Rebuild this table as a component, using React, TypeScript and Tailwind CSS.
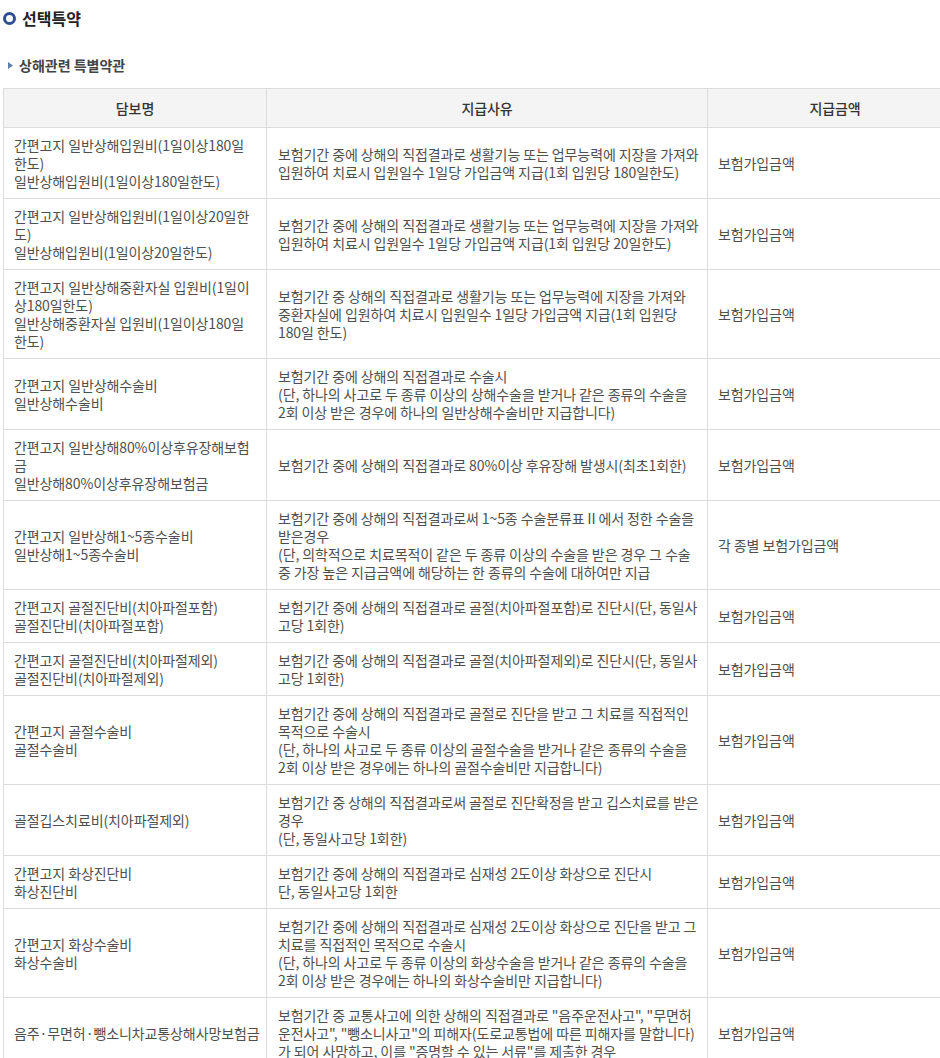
import React from 'react';

type Row = {
  name: string[];
  reason: string[];
  amount: string;
};

const rows: Row[] = [
  {
    name: ['간편고지 일반상해입원비(1일이상180일', '한도)', '일반상해입원비(1일이상180일한도)'],
    reason: [
      '보험기간 중에 상해의 직접결과로 생활기능 또는 업무능력에 지장을 가져와',
      '입원하여 치료시 입원일수 1일당 가입금액 지급(1회 입원당 180일한도)',
    ],
    amount: '보험가입금액',
  },
  {
    name: ['간편고지 일반상해입원비(1일이상20일한', '도)', '일반상해입원비(1일이상20일한도)'],
    reason: [
      '보험기간 중에 상해의 직접결과로 생활기능 또는 업무능력에 지장을 가져와',
      '입원하여 치료시 입원일수 1일당 가입금액 지급(1회 입원당 20일한도)',
    ],
    amount: '보험가입금액',
  },
  {
    name: ['간편고지 일반상해중환자실 입원비(1일이', '상180일한도)', '일반상해중환자실 입원비(1일이상180일', '한도)'],
    reason: [
      '보험기간 중 상해의 직접결과로 생활기능 또는 업무능력에 지장을 가져와',
      '중환자실에 입원하여 치료시 입원일수 1일당 가입금액 지급(1회 입원당',
      '180일 한도)',
    ],
    amount: '보험가입금액',
  },
  {
    name: ['간편고지 일반상해수술비', '일반상해수술비'],
    reason: [
      '보험기간 중에 상해의 직접결과로 수술시',
      '(단, 하나의 사고로 두 종류 이상의 상해수술을 받거나 같은 종류의 수술을',
      '2회 이상 받은 경우에 하나의 일반상해수술비만 지급합니다)',
    ],
    amount: '보험가입금액',
  },
  {
    name: ['간편고지 일반상해80%이상후유장해보험', '금', '일반상해80%이상후유장해보험금'],
    reason: ['보험기간 중에 상해의 직접결과로 80%이상 후유장해 발생시(최초1회한)'],
    amount: '보험가입금액',
  },
  {
    name: ['간편고지 일반상해1~5종수술비', '일반상해1~5종수술비'],
    reason: [
      '보험기간 중에 상해의 직접결과로써 1~5종 수술분류표Ⅱ에서 정한 수술을',
      '받은경우',
      '(단, 의학적으로 치료목적이 같은 두 종류 이상의 수술을 받은 경우 그 수술',
      '중 가장 높은 지급금액에 해당하는 한 종류의 수술에 대하여만 지급',
    ],
    amount: '각 종별 보험가입금액',
  },
  {
    name: ['간편고지 골절진단비(치아파절포함)', '골절진단비(치아파절포함)'],
    reason: ['보험기간 중에 상해의 직접결과로 골절(치아파절포함)로 진단시(단, 동일사', '고당 1회한)'],
    amount: '보험가입금액',
  },
  {
    name: ['간편고지 골절진단비(치아파절제외)', '골절진단비(치아파절제외)'],
    reason: ['보험기간 중에 상해의 직접결과로 골절(치아파절제외)로 진단시(단, 동일사', '고당 1회한)'],
    amount: '보험가입금액',
  },
  {
    name: ['간편고지 골절수술비', '골절수술비'],
    reason: [
      '보험기간 중에 상해의 직접결과로 골절로 진단을 받고 그 치료를 직접적인',
      '목적으로 수술시',
      '(단, 하나의 사고로 두 종류 이상의 골절수술을 받거나 같은 종류의 수술을',
      '2회 이상 받은 경우에는 하나의 골절수술비만 지급합니다)',
    ],
    amount: '보험가입금액',
  },
  {
    name: ['골절깁스치료비(치아파절제외)'],
    reason: [
      '보험기간 중 상해의 직접결과로써 골절로 진단확정을 받고 깁스치료를 받은',
      '경우',
      '(단, 동일사고당 1회한)',
    ],
    amount: '보험가입금액',
  },
  {
    name: ['간편고지 화상진단비', '화상진단비'],
    reason: ['보험기간 중에 상해의 직접결과로 심재성 2도이상 화상으로 진단시', '단, 동일사고당 1회한'],
    amount: '보험가입금액',
  },
  {
    name: ['간편고지 화상수술비', '화상수술비'],
    reason: [
      '보험기간 중에 상해의 직접결과로 심재성 2도이상 화상으로 진단을 받고 그',
      '치료를 직접적인 목적으로 수술시',
      '(단, 하나의 사고로 두 종류 이상의 화상수술을 받거나 같은 종류의 수술을',
      '2회 이상 받은 경우에는 하나의 화상수술비만 지급합니다)',
    ],
    amount: '보험가입금액',
  },
  {
    name: ['음주·무면허·뺑소니차교통상해사망보험금'],
    reason: [
      '보험기간 중 교통사고에 의한 상해의 직접결과로 "음주운전사고", "무면허',
      '운전사고", "뺑소니사고"의 피해자(도로교통법에 따른 피해자를 말합니다)',
      '가 되어 사망하고, 이를 "증명할 수 있는 서류"를 제출한 경우',
    ],
    amount: '보험가입금액',
  },
];

const Lines = ({ lines }: { lines: string[] }) => (
  <>
    {lines.map((l, i) => (
      <div key={i} className="whitespace-nowrap">
        {l}
      </div>
    ))}
  </>
);

export default function App() {
  return (
    <div
      className="w-[940px] overflow-hidden bg-white text-[#4f4f4f]"
      style={{ fontFamily: '"Noto Sans CJK KR", "Noto Sans", sans-serif' }}
    >
      {/* 타이틀 */}
      <div className="flex items-center gap-[6px] pl-[3px] pt-[8px] h-[28px]">
        <span className="block w-[13px] h-[13px] rounded-full border-[3px] border-[#2f4f94]" />
        <h1 className="text-[16px] font-bold text-[#222] leading-[20px]">선택특약</h1>
      </div>

      <div className="flex items-center gap-[6px] pl-[8px] mt-[27px] h-[20px]">
        <svg width="5" height="7" viewBox="0 0 5 7" className="block">
          <polygon points="0,0 5,3.5 0,7" fill="#5f7fae" />
        </svg>
        <h2 className="text-[14px] font-bold text-[#444] leading-[20px]">상해관련 특별약관</h2>
      </div>

      <div className="pl-[3px] mt-[13px]">
        <table className="table-fixed w-[960px] border-collapse text-[14px] leading-[18px] tracking-[-0.1px]">
          <colgroup>
            <col className="w-[263px]" />
            <col className="w-[441px]" />
            <col />
          </colgroup>
          <thead>
            <tr className="bg-[#f4f4f4] h-[39px]">
              <th className="border border-[#dcdcdc] font-medium text-[#333] text-[14px]">담보명</th>
              <th className="border border-[#dcdcdc] font-medium text-[#333] text-[14px]">지급사유</th>
              <th className="border border-[#dcdcdc] font-medium text-[#333] text-[14px]">지급금액</th>
            </tr>
          </thead>
          <tbody>
            {rows.map((r, i) => (
              <tr key={i}>
                <td className="border border-[#dcdcdc] px-[10px] py-[8px] align-middle">
                  <Lines lines={r.name} />
                </td>
                <td className="border border-[#dcdcdc] pl-[11px] pr-[6px] py-[8px] align-middle">
                  <Lines lines={r.reason} />
                </td>
                <td className="border border-[#dcdcdc] px-[10px] py-[8px] align-middle">{r.amount}</td>
              </tr>
            ))}
          </tbody>
        </table>
      </div>
    </div>
  );
}
